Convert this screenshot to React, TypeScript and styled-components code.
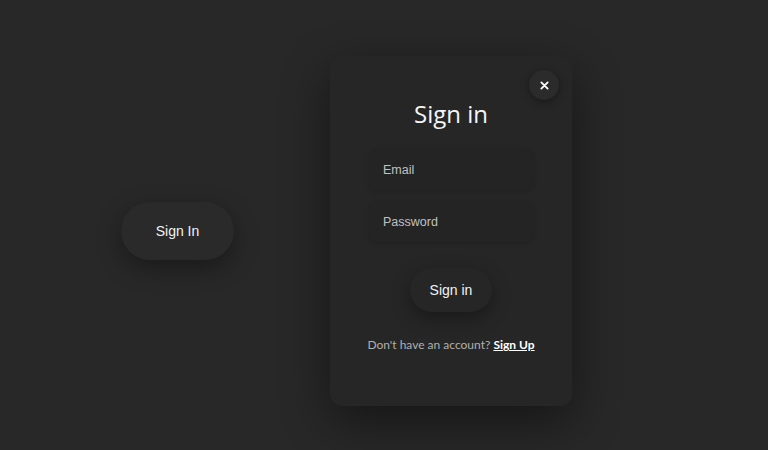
import styled, { createGlobalStyle } from "styled-components";

const Global = createGlobalStyle`
  html, body {
    margin: 0;
    padding: 0;
    background: #282828;
  }
  * {
    box-sizing: border-box;
  }
`;

const Page = styled.div`
  width: 768px;
  height: 450px;
  background: #282828;
  display: flex;
  align-items: flex-start;
  font-family: "Liberation Sans", Arial, sans-serif;
`;

const Left = styled.div`
  width: 330px;
  height: 100%;
  display: flex;
  align-items: center;
  padding-left: 121px;
  padding-top: 12px;
`;

const PillButton = styled.button`
  width: 113px;
  height: 58px;
  border: none;
  border-radius: 29px;
  background: #2a2a2a;
  color: #f2f2f2;
  font-family: "Liberation Sans", Arial, sans-serif;
  font-size: 14px;
  box-shadow: 0 8px 24px rgba(0, 0, 0, 0.35);
`;

const Modal = styled.div`
  position: relative;
  margin-top: 56px;
  width: 242px;
  height: 350px;
  background: #262626;
  border-radius: 12px;
  box-shadow: 0 16px 48px rgba(0, 0, 0, 0.45);
  display: flex;
  flex-direction: column;
  align-items: center;
  padding-top: 43px;
`;

const Close = styled.button`
  position: absolute;
  top: 14px;
  right: 13px;
  width: 30px;
  height: 30px;
  border: none;
  border-radius: 50%;
  background: #2b2b2b;
  box-shadow: 0 2px 8px rgba(0, 0, 0, 0.35);
  display: flex;
  align-items: center;
  justify-content: center;
  padding: 0;
`;

const Title = styled.h1`
  margin: 0;
  font-family: "Open Sans", sans-serif;
  font-weight: 400;
  font-size: 24px;
  color: #f5f5f5;
  line-height: 30px;
`;

const Form = styled.form`
  display: flex;
  flex-direction: column;
  align-items: center;
  gap: 12px;
  margin-top: 21px;
`;

const Input = styled.input`
  width: 164px;
  height: 40px;
  border: none;
  outline: none;
  border-radius: 8px;
  background: #242424;
  box-shadow: 0 1px 5px rgba(0, 0, 0, 0.15);
  padding: 0 14px;
  font-family: "Liberation Sans", Arial, sans-serif;
  font-size: 12.5px;
  color: #ddd;
  &::placeholder {
    color: #c0c0c0;
  }
`;

const Submit = styled.button`
  margin-top: 14px;
  width: 82px;
  height: 44px;
  border: none;
  border-radius: 22px;
  background: #262626;
  color: #f2f2f2;
  font-family: "Liberation Sans", Arial, sans-serif;
  font-size: 14px;
  box-shadow: 0 6px 18px rgba(0, 0, 0, 0.35);
`;

const Footer = styled.p`
  margin: 25px 0 0;
  font-family: "Lato", sans-serif;
  font-size: 12px;
  color: #b0b0b0;
  a {
    color: #fff;
    font-weight: 700;
    text-decoration: underline;
  }
`;

export default function App() {
  return (
    <Page>
      <Global />
      <Left>
        <PillButton>Sign In</PillButton>
      </Left>
      <Modal>
        <Close aria-label="Close">
          <svg width="9" height="9" viewBox="0 0 10 10">
            <path d="M1.5 1.5 L8.5 8.5 M8.5 1.5 L1.5 8.5" stroke="#fff" strokeWidth="2" strokeLinecap="round" />
          </svg>
        </Close>
        <Title>Sign in</Title>
        <Form onSubmit={(e) => e.preventDefault()}>
          <Input type="email" placeholder="Email" />
          <Input type="password" placeholder="Password" />
          <Submit type="submit">Sign in</Submit>
        </Form>
        <Footer>
          Don&apos;t have an account? <a href="#">Sign Up</a>
        </Footer>
      </Modal>
    </Page>
  );
}
